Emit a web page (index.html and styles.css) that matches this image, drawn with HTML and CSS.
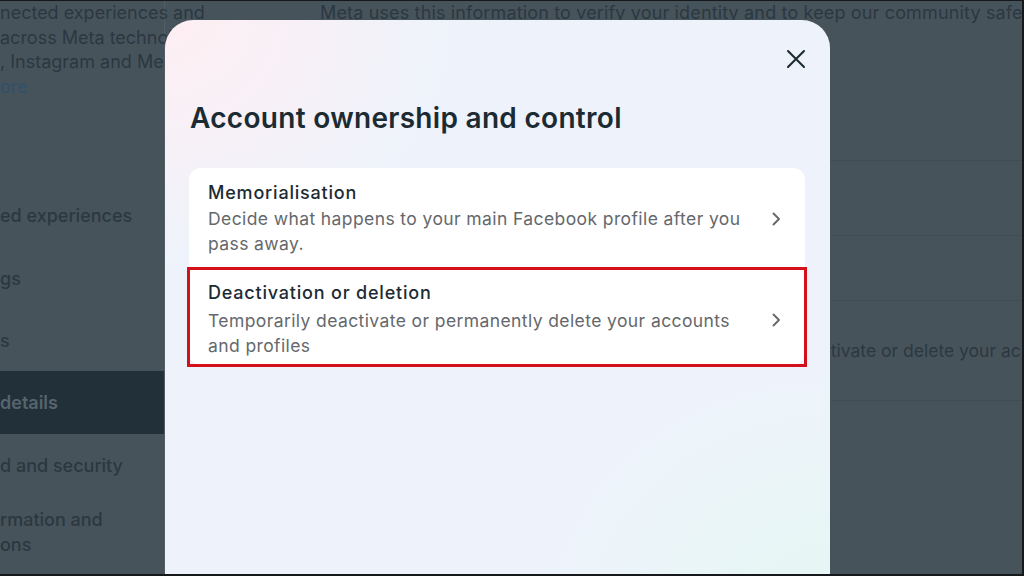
FILE: index.html
```html
<!DOCTYPE html>
<html lang="en">
<head>
<meta charset="utf-8">
<title>Account ownership and control</title>
<link rel="stylesheet" href="styles.css">
</head>
<body>
<div class="page">
  <aside class="sidebar">
    <div class="intro">
      <p class="intro-line">nected experiences and</p>
      <p class="intro-line">across Meta technologies</p>
      <p class="intro-line">, Instagram and Messenger</p>
      <p class="intro-line link">ore</p>
    </div>
    <nav class="nav">
      <div class="nav-item">ed experiences</div>
      <div class="nav-item">gs</div>
      <div class="nav-item">s</div>
      <div class="nav-item active">details</div>
      <div class="nav-item">d and security</div>
      <div class="nav-item two">rmation and<br>ons</div>
    </nav>
  </aside>
  <main class="main">
    <p class="main-lead">Meta uses this information to verify your identity and to keep our community safe.</p>
    <div class="main-list">
      <div class="main-row r1"></div>
      <div class="main-row r2"></div>
      <div class="main-row r3"><span class="row-text">Deactivate or delete your ac</span></div>
      <div class="main-row r4"></div>
    </div>
  </main>
</div>

<section class="modal">
  <div class="modal-top">
    <button class="close" aria-label="Close">
      <svg viewBox="0 0 20 20" width="20" height="20"><path d="M2 2 L18 18 M18 2 L2 18" stroke="#1c2b33" stroke-width="2.1" stroke-linecap="round" fill="none"/></svg>
    </button>
  </div>
  <h1 class="modal-title">Account ownership and control</h1>
  <div class="card">
    <div class="option">
      <div class="option-text">
        <div class="option-title">Memorialisation</div>
        <div class="option-desc">Decide what happens to your main Facebook profile after you pass away.</div>
      </div>
      <svg class="chev" viewBox="0 0 24 24" width="24" height="24"><path d="M9.5 6.5 L15 12 L9.5 17.5" stroke="#65686c" stroke-width="1.9" stroke-linecap="round" stroke-linejoin="round" fill="none"/></svg>
    </div>
    <div class="option highlighted">
      <div class="option-text">
        <div class="option-title">Deactivation or deletion</div>
        <div class="option-desc">Temporarily deactivate or permanently delete your accounts and profiles</div>
      </div>
      <svg class="chev" viewBox="0 0 24 24" width="24" height="24"><path d="M9.5 6.5 L15 12 L9.5 17.5" stroke="#65686c" stroke-width="1.9" stroke-linecap="round" stroke-linejoin="round" fill="none"/></svg>
    </div>
  </div>
</section>
</body>
</html>
```

FILE: styles.css
```css
* { box-sizing: border-box; }
html, body { margin: 0; padding: 0; }
body {
  width: 1024px;
  height: 576px;
  overflow: hidden;
  background: #47535b;
  font-family: Inter, "Noto Sans", sans-serif;
  border-top: 1px solid #15191c;
  border-bottom: 2px solid #15191c;
  border-right: 2px solid #15191c;
  position: relative;
}
.page {
  display: grid;
  grid-template-columns: 165px 1fr;
  height: 100%;
}
.sidebar {
  color: #2b3841;
  font-size: 18px;
  font-weight: 500;
  white-space: nowrap;
  border-right: 1px solid #525e66;
}
.intro-line {
  margin: 0;
  line-height: 24.5px;
  font-weight: 400;
}
.intro-line.link { color: #30506b; }
.nav { margin-top: 85px; }
.nav-item {
  height: 62px;
  display: flex;
  align-items: center;
  line-height: 25px;
}
.nav-item:first-child { height: 63px; }
.nav-item.active {
  height: 63px;
  background: #22303a;
  color: #56646d;
  font-weight: 600;
}
.nav-item.two { height: 72px; }
.main {
  padding-left: 155px;
  color: #2b3841;
  font-size: 18px;
  white-space: nowrap;
  overflow: hidden;
}
.main-lead {
  margin: 0;
  line-height: 24px;
  letter-spacing: 0.15px;
}
.main-list { margin-top: 135px; border-top: 1px solid #414d55; }
.main-row { border-bottom: 1px solid #414d55; display: flex; align-items: center; }
.r1 { height: 75px; }
.r2 { height: 65px; }
.r3 { height: 100px; }
.r4 { height: 120px; border-bottom: 0; }
.row-text { padding-left: 468px; font-size: 17.5px; }

.modal {
  position: absolute;
  left: 165px;
  top: 19px;
  width: 665px;
  height: 600px;
  border-radius: 28px 28px 0 0;
  background:
    radial-gradient(ellipse 420px 360px at 0% 0%, rgba(255, 238, 242, 0.95), rgba(255, 238, 242, 0) 70%),
    radial-gradient(ellipse 420px 360px at 100% 100%, rgba(228, 247, 242, 0.95), rgba(228, 247, 242, 0) 70%),
    #eef3fb;
  padding: 0 25px 0 24px;
}
.modal-top {
  display: flex;
  justify-content: flex-end;
  padding-top: 29px;
}
.close {
  width: 20px;
  height: 20px;
  padding: 0;
  border: 0;
  background: none;
  display: block;
  margin-right: -1px;
}
.close svg { display: block; }
.modal-title {
  margin: 31px 0 0 1px;
  font-size: 28px;
  font-weight: 600;
  color: #1c2b33;
  line-height: 36px;
  letter-spacing: 0.3px;
}
.card {
  margin-top: 32px;
  background: #ffffff;
  border-radius: 12px;
}
.option {
  display: flex;
  align-items: center;
  gap: 12px;
  padding: 14px 17px 13px 19px;
}
.option-text { flex: 1; }
.option-title {
  font-size: 18px;
  font-weight: 500;
  color: #1c2b33;
  line-height: 22px;
  letter-spacing: 0.8px;
}
.option-desc {
  font-size: 17.5px;
  color: #65686c;
  line-height: 25px;
  margin-top: 2px;
  letter-spacing: 0.4px;
}
.chev { flex: none; display: block; }
.option.highlighted {
  outline: 3px solid #d3101b;
  outline-offset: -1px;
  padding-top: 13px;
  padding-bottom: 7px;
}
.option.highlighted .option-desc { margin-top: 4px; }
```
